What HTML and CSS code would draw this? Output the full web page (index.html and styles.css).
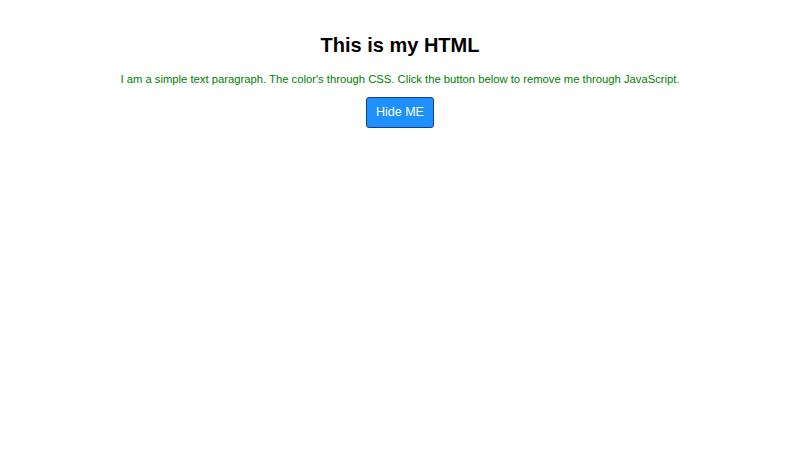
FILE: index.html
```html
<!DOCTYPE html>
<html>
<head>
<meta charset="utf-8">
<link rel="stylesheet" href="styles.css">
</head>
<body>
<main class="page">
  <h1 class="title">This is my HTML</h1>
  <p class="text">I am a simple text paragraph. The color's through CSS. Click the button below to remove me through JavaScript.</p>
  <button class="btn">Hide ME</button>
</main>
</body>
</html>
```
FILE: styles.css
```css
html, body {
  margin: 0;
  background: #fff;
}
.page {
  font-family: "Liberation Sans", Arial, sans-serif;
  text-align: center;
  padding-top: 33px;
}
.title {
  font-size: 20px;
  font-weight: bold;
  margin: 0;
  line-height: 24px;
  color: #000;
}
.text {
  color: #008000;
  font-size: 11.25px;
  margin: 14.5px 0 11.5px;
  line-height: 14px;
}
.btn {
  font-family: "Liberation Sans", Arial, sans-serif;
  background: #1e90ff;
  color: #fff;
  border: 1px solid #143f87;
  border-radius: 3px;
  font-size: 12.5px;
  padding: 7.2px 9.2px;
  line-height: 15px;
  margin: 0;
}
```
